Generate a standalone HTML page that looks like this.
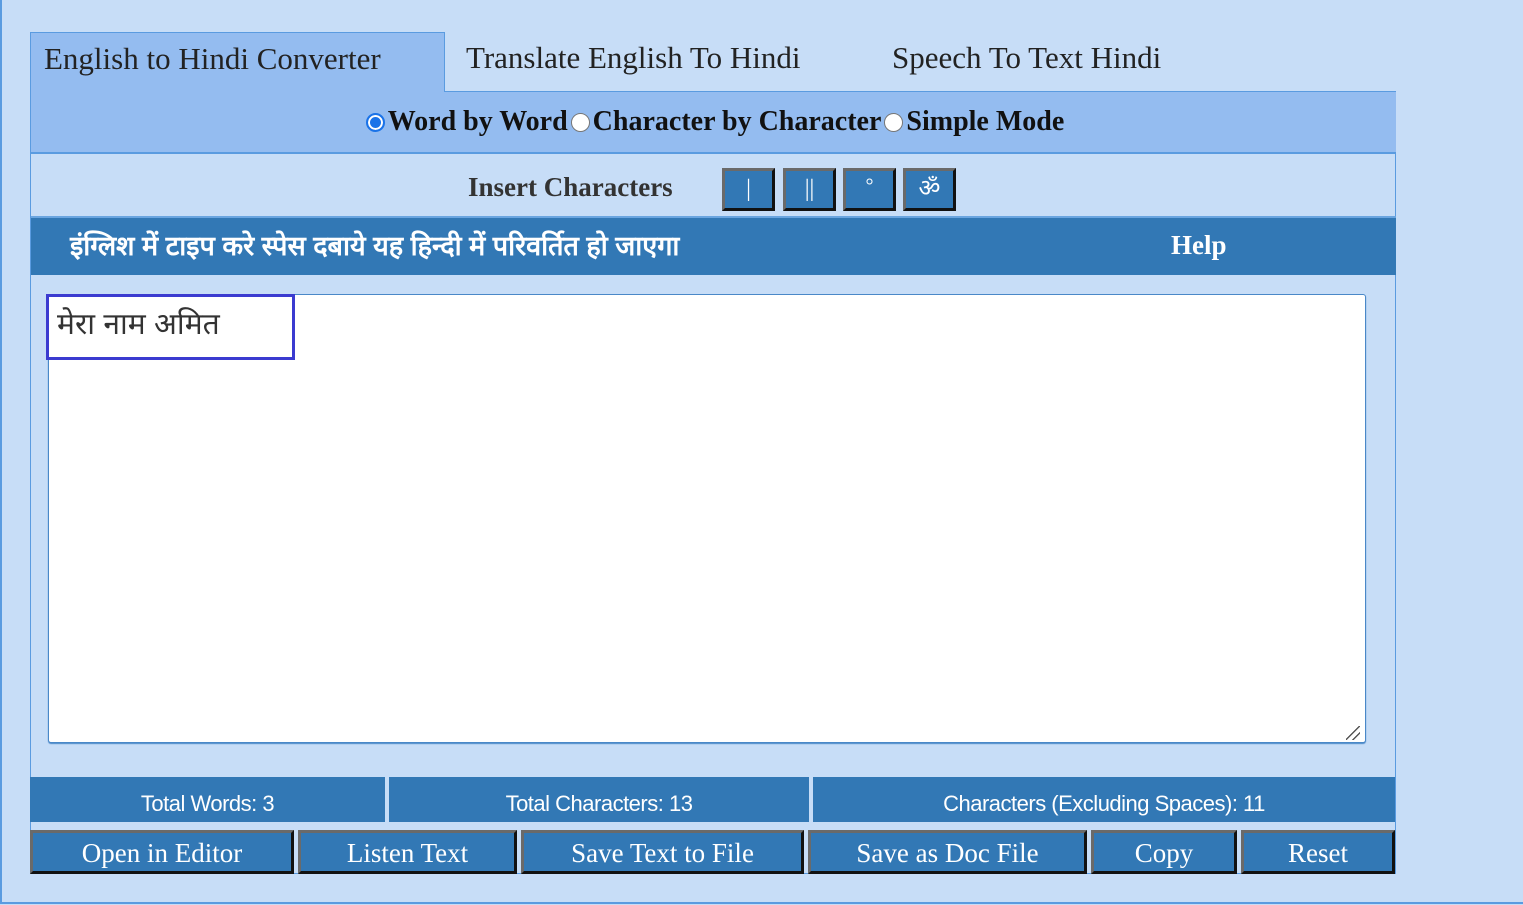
<!DOCTYPE html>
<html><head><meta charset="utf-8"><style>
*{box-sizing:border-box;margin:0;padding:0}
body{width:1523px;height:905px;background:#c7ddf7;position:relative;overflow:hidden;font-family:"Liberation Serif",serif}
.a{position:absolute}
.frame{left:0;top:-2px;width:1523px;height:906px;border-left:2px solid #5a9be0;border-bottom:2px solid #5a9be0}
.tab{top:32px;height:60px;font-size:31px;color:#222;line-height:44px;padding-top:4px;white-space:nowrap}
.btn{background:#3278b5;color:#fff;border-style:solid;border-width:3px;border-color:#6a6a6a #111 #111 #6a6a6a;text-align:center}
.stat{top:777px;height:45px;background:#3278b5;color:#fff;font-family:"Liberation Sans",sans-serif;font-size:22px;line-height:53px;text-align:center;letter-spacing:-0.5px}
.bb{top:830px;height:44px;font-size:27px;line-height:40px;white-space:nowrap}
.radio{display:inline-block;width:19px;height:19px;border-radius:50%;border:1px solid #777;background:#fff;vertical-align:-2px;margin:0 3px}
.radio.on{border:2px solid #1a73e8;box-shadow:inset 0 0 0 2px #fff;background:#1a73e8}
</style></head><body>
<div class="a frame"></div>
<div class="a" style="left:30px;top:92px;width:1366px;height:782px;border:1px solid #5a9be0;border-top:none"></div>
<div class="a" style="left:30px;top:91px;width:1366px;height:1px;background:#5a9be0"></div>
<div class="a tab" style="left:30px;width:415px;background:#94bcf0;border:1px solid #5a9be0;border-bottom:none;padding-left:13px">English to Hindi Converter</div>
<div class="a tab" style="left:466px">Translate English To Hindi</div>
<div class="a tab" style="left:892px">Speech To Text Hindi</div>
<div class="a" style="left:31px;top:92px;width:1365px;height:62px;background:#94bcf0;border-bottom:2px solid #5a9be0;text-align:center;font-size:28px;font-weight:bold;line-height:60px;color:#111;white-space:nowrap">
<span class="radio on"></span>Word by Word<span class="radio"></span>Character by Character<span class="radio"></span>Simple Mode</div>
<div class="a" style="left:468px;top:172px;font-size:27px;font-weight:bold;color:#333">Insert Characters</div>
<div class="a btn" style="left:722px;top:168px;width:53px;height:43px;font-size:24px;line-height:36px">|</div>
<div class="a btn" style="left:783px;top:168px;width:53px;height:43px;font-size:24px;line-height:36px">||</div>
<div class="a btn" style="left:843px;top:168px;width:53px;height:43px;font-size:20px;line-height:30px">°</div>
<div class="a btn" style="left:903px;top:168px;width:53px;height:43px;font-size:24px;line-height:36px;font-family:sans-serif">ॐ</div>
<div class="a" style="left:31px;top:216px;width:1365px;height:59px;background:#3278b5;border-top:2px solid #6aa5e0"></div>
<div class="a" style="left:70px;top:226px;font-size:27px;font-weight:bold;color:#fff;font-family:'Liberation Sans',sans-serif;white-space:nowrap">इंग्लिश में टाइप करे स्पेस दबाये यह हिन्दी में परिवर्तित हो जाएगा</div>
<div class="a" style="left:1171px;top:230px;font-size:27px;font-weight:bold;color:#fff">Help</div>
<div class="a" style="left:48px;top:294px;width:1318px;height:449px;background:#fff;border:1px solid #4a88c8;border-radius:3px;box-shadow:0 1px 1px #4a88c8"></div>
<div class="a" style="left:46px;top:294px;width:249px;height:66px;border:3px solid #3b3bd0"></div>
<div class="a" style="left:57px;top:302px;font-size:30px;color:#333;font-family:'Liberation Sans',sans-serif">मेरा नाम अमित</div>
<div class="a" style="left:1346px;top:726px;width:14px;height:14px;background:linear-gradient(135deg,transparent 45%,#555 46%,#555 52%,transparent 53%,transparent 70%,#555 71%,#555 77%,transparent 78%)"></div>
<div class="a stat" style="left:30px;width:355px">Total Words: 3</div>
<div class="a stat" style="left:389px;width:420px">Total Characters: 13</div>
<div class="a stat" style="left:813px;width:582px">Characters (Excluding Spaces): 11</div>
<div class="a btn bb" style="left:30px;width:264px">Open in Editor</div>
<div class="a btn bb" style="left:298px;width:219px">Listen Text</div>
<div class="a btn bb" style="left:521px;width:283px">Save Text to File</div>
<div class="a btn bb" style="left:808px;width:279px">Save as Doc File</div>
<div class="a btn bb" style="left:1091px;width:146px">Copy</div>
<div class="a btn bb" style="left:1241px;width:154px">Reset</div>
</body></html>
